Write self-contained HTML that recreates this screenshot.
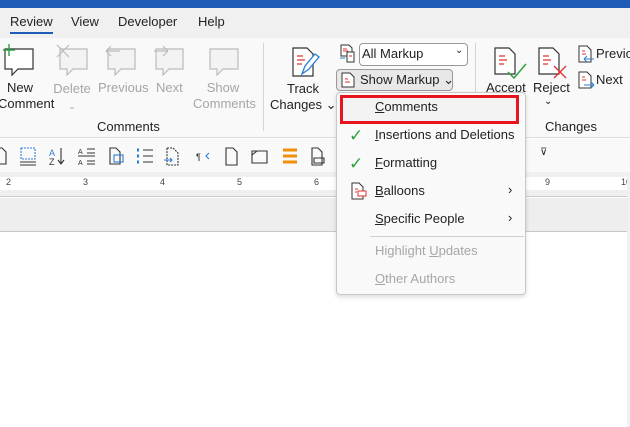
<!DOCTYPE html><html><head><style>
*{margin:0;padding:0;box-sizing:border-box}
body{width:630px;height:427px;overflow:hidden;position:relative;background:#fff;font-family:"Segoe UI","Liberation Sans",sans-serif;font-size:13px;color:#222}
.a{position:absolute}
.t{position:absolute;white-space:nowrap}
.g{color:#a6a6a6}
.c{text-align:center}
u{text-decoration:underline}
</style></head><body>
<div class="a" style="left:0;top:0;width:630px;height:8px;background:#1e5cb8"></div>
<div class="a" style="left:0;top:8px;width:630px;height:30px;background:#f0f0f0"></div>
<div class="t" style="left:10px;top:14px;font-size:13px">Review</div>
<div class="a" style="left:10px;top:32px;width:43px;height:2px;background:#1e5cb8"></div>
<div class="t" style="left:71px;top:14px;font-size:13px">View</div>
<div class="t" style="left:118px;top:14px;font-size:13px">Developer</div>
<div class="t" style="left:198px;top:14px;font-size:13px">Help</div>
<div class="a" style="left:0;top:38px;width:630px;height:100px;background:#f9f9f9;border-bottom:1px solid #dcdcdc"></div>
<svg class="a" style="left:0;top:42px" width="250" height="34" viewBox="0 0 250 34">
<g fill="#fff" stroke="#333" stroke-width="1.2"><path d="M5 7h28v20H18l-6 6v-6H5z"/></g>
<path d="M9 2v12M3 8h12" stroke="#2ea043" stroke-width="1.4"/>
<g fill="#f3f3f3" stroke="#bbb" stroke-width="1.2">
<path d="M60 7h27v20H73l-6 6v-6h-7z"/><path d="M108 7h27v20h-14l-6 6v-6h-7z"/><path d="M156 7h27v20h-14l-6 6v-6h-7z"/><path d="M210 7h28v20h-15l-6 6v-6h-7z"/></g>
<path d="M57 3l12 12M69 3L57 15M106 9h14M106 9l5-5M106 9l5 5M154 9h14M168 9l-5-5M168 9l-5 5" stroke="#bbb" stroke-width="1.2" fill="none"/>
</svg>
<div class="t c" style="left:-2px;top:80px;width:44px;line-height:16px">New<br>Comment</div>
<div class="t c g" style="left:52px;top:81px;width:40px;line-height:16px">Delete<br><span style="font-size:9px">⌄</span></div>
<div class="t g" style="left:98px;top:80px">Previous</div>
<div class="t g" style="left:156px;top:80px">Next</div>
<div class="t c g" style="left:193px;top:80px;width:60px;line-height:16px">Show<br>Comments</div>
<div class="t" style="left:97px;top:119px">Comments</div>
<div class="a" style="left:263px;top:43px;width:1px;height:88px;background:#d4d4d4"></div>
<svg class="a" style="left:290px;top:46px" width="30" height="34"><path d="M3 2h14l6 6v22H3z" fill="#fff" stroke="#333" stroke-width="1.2"/><path d="M7 10h6M7 14h8M7 18h5" stroke="#e03030" stroke-width="1.2"/><path d="M12 28l3-8 10-12 4 3-10 12z" fill="#fff" stroke="#2a7fd4" stroke-width="1.3"/></svg>
<div class="t c" style="left:270px;top:81px;width:66px;line-height:16px">Track<br>Changes ⌄</div>
<svg class="a" style="left:338px;top:44px" width="20" height="20"><path d="M3 1h8l3 3v8H3z" fill="#fff" stroke="#333"/><path d="M9 8h7v10H9z" fill="#fff" stroke="#333"/><path d="M5 5h4M5 7h5M11 12h3" stroke="#e03030"/><path d="M2 14h5" stroke="#2a7fd4"/></svg>
<div class="a" style="left:359px;top:43px;width:109px;height:23px;border:1px solid #999;border-radius:4px;background:#fff"></div>
<div class="t" style="left:362px;top:46px;font-size:13px">All Markup</div>
<div class="t" style="left:455px;top:45px;font-size:10px">⌄</div>
<div class="a" style="left:336px;top:69px;width:117px;height:22px;border:1px solid #999;border-radius:4px;background:#e8e8e8"></div>
<svg class="a" style="left:341px;top:72px" width="14" height="16"><path d="M1 1h8l4 4v10H1z" fill="#fff" stroke="#333"/><path d="M4 7h3M4 10h5" stroke="#e03030"/></svg>
<div class="t" style="left:360px;top:72px;font-size:13px">Show Markup ⌄</div>
<div class="a" style="left:475px;top:43px;width:1px;height:88px;background:#d4d4d4"></div>
<svg class="a" style="left:493px;top:46px" width="36" height="34"><path d="M2 2h14l6 6v20H2z" fill="#fff" stroke="#333" stroke-width="1.2"/><path d="M6 10h6M6 14h8M6 18h5" stroke="#e03030" stroke-width="1.2"/><path d="M15 26l6 6 12-14" stroke="#2ea043" stroke-width="1.5" fill="none"/></svg>
<div class="t" style="left:486px;top:80px;font-size:13px">Accept</div>
<svg class="a" style="left:537px;top:46px" width="36" height="34"><path d="M2 2h14l6 6v20H2z" fill="#fff" stroke="#333" stroke-width="1.2"/><path d="M6 10h6M6 14h8M6 18h5M17 20l12 12M29 20L17 32" stroke="#e03030" stroke-width="1.3"/></svg>
<div class="t" style="left:533px;top:80px;font-size:13px">Reject</div>
<div class="t" style="left:544px;top:96px;font-size:10px">⌄</div>
<svg class="a" style="left:577px;top:45px" width="20" height="50"><path d="M2 1h8l4 4v12H2z" fill="#fff" stroke="#333"/><path d="M5 6h3M5 9h4" stroke="#e03030"/><path d="M7 14h10M7 14l3-3M7 14l3 3" stroke="#2a7fd4" fill="none"/><path d="M2 27h8l4 4v12H2z" fill="#fff" stroke="#333"/><path d="M5 32h3M5 35h4" stroke="#e03030"/><path d="M7 40h10M17 40l-3-3M17 40l-3 3" stroke="#2a7fd4" fill="none"/></svg>
<div class="t" style="left:596px;top:46px;font-size:13px">Previo</div>
<div class="t" style="left:596px;top:72px;font-size:13px">Next</div>
<div class="t" style="left:545px;top:119px;font-size:13px">Changes</div>
<div class="a" style="left:0;top:139px;width:630px;height:33px;background:#f9f9f9;box-shadow:0 2px 3px rgba(0,0,0,.12)"></div>
<svg class="a" style="left:0;top:145px" width="330" height="22" stroke="#333" fill="none" stroke-width="1.1">
<path d="M-4 3h6l4 4v12H-4z"/>
<rect x="21" y="3" width="14" height="11" stroke="#2a7fd4" stroke-dasharray="2 1"/><path d="M20 17h16M20 20h16"/>
<text x="49" y="11" font-size="9" fill="#2a7fd4" stroke="none" font-family="Liberation Sans">A</text><text x="49" y="20" font-size="9" fill="#333" stroke="none" font-family="Liberation Sans">Z</text><path d="M61 3v15M58 15l3 4 3-4"/>
<path d="M87 4h8M87 8h8M78 11h17M87 16h8M87 19h8"/><text x="78" y="9" font-size="7" fill="#333" stroke="none">A</text><text x="78" y="20" font-size="7" fill="#333" stroke="none">A</text>
<path d="M110 3h6l4 4v12h-10z"/><rect x="114" y="10" width="9" height="7" stroke="#2a7fd4"/>
<path d="M143 5h10M143 11h10M143 17h10"/><path d="M137 5h2M137 11h2M137 17h2" stroke="#2a7fd4" stroke-width="3"/>
<path d="M167 3h6l5 5v12h-11z" stroke-dasharray="2 1"/><path d="M164 15h8M170 13l2 2-2 2" stroke="#2a7fd4"/>
<text x="196" y="15" font-size="9" fill="#333" stroke="none">¶</text><path d="M209 8l-3 3 3 3" stroke="#2a7fd4"/>
<path d="M226 3h7l4 4v13h-11z"/>
<path d="M252 6h15v12h-15zM252 10l5-4"/>
<path d="M283 5h14M283 11h14M283 17h14" stroke="#f0900a" stroke-width="3"/>
<path d="M312 3h6l4 4v13h-10zM314 13h10v5h-10z"/>
</svg>
<div class="t" style="left:540px;top:147px;font-size:10px">⊽</div>
<div class="a" style="left:0;top:172px;width:630px;height:5px;background:#f0f0f0"></div>
<div class="a" style="left:0;top:177px;width:630px;height:13px;background:#fff;font-size:9px;color:#444">
<span class="t" style="left:6px;top:0">2</span><span class="t" style="left:83px;top:0">3</span><span class="t" style="left:160px;top:0">4</span><span class="t" style="left:237px;top:0">5</span><span class="t" style="left:314px;top:0">6</span><span class="t" style="left:545px;top:0">9</span><span class="t" style="left:621px;top:0">10</span>
</div>
<div class="a" style="left:0;top:190px;width:630px;height:7px;background:#f0f0f0;border-bottom:1px solid #ccc"></div>
<div class="a" style="left:0;top:198px;width:630px;height:34px;background:#eeeeee;border-bottom:1px solid #c8c8c8"></div>
<div class="a" style="left:627px;top:172px;width:3px;height:255px;background:#f0f0f0"></div>
<div class="a" style="left:336px;top:92px;width:190px;height:203px;background:#f9f9f9;border:1px solid #c8c8c8;border-radius:4px;box-shadow:0 2px 5px rgba(0,0,0,.15)"></div>
<div class="a" style="left:340px;top:95px;width:179px;height:29px;border:3px solid #e8141e;background:#f3f3f3"></div>
<div class="t" style="left:375px;top:99px;font-size:13px"><u>C</u>omments</div>
<div class="t" style="left:349px;top:126px;color:#2ea043;font-size:17px">✓</div>
<div class="t" style="left:375px;top:127px;font-size:13px"><u>I</u>nsertions and Deletions</div>
<div class="t" style="left:349px;top:154px;color:#2ea043;font-size:17px">✓</div>
<div class="t" style="left:375px;top:155px;font-size:13px"><u>F</u>ormatting</div>
<svg class="a" style="left:351px;top:182px" width="16" height="18"><path d="M1 1h7l4 4v12H1z" fill="#fff" stroke="#333"/><path d="M4 7h3M4 10h2" stroke="#e03030"/><rect x="7" y="9" width="8" height="5" fill="#fff" stroke="#e03030"/></svg>
<div class="t" style="left:375px;top:183px;font-size:13px"><u>B</u>alloons</div>
<div class="t" style="left:508px;top:182px;font-size:13px">›</div>
<div class="t" style="left:375px;top:211px;font-size:13px"><u>S</u>pecific People</div>
<div class="t" style="left:508px;top:210px;font-size:13px">›</div>
<div class="a" style="left:370px;top:236px;width:154px;height:1px;background:#d0d0d0"></div>
<div class="t g" style="left:375px;top:243px;font-size:13px">Highlight <u>U</u>pdates</div>
<div class="t g" style="left:375px;top:271px;font-size:13px"><u>O</u>ther Authors</div>
</body></html>
